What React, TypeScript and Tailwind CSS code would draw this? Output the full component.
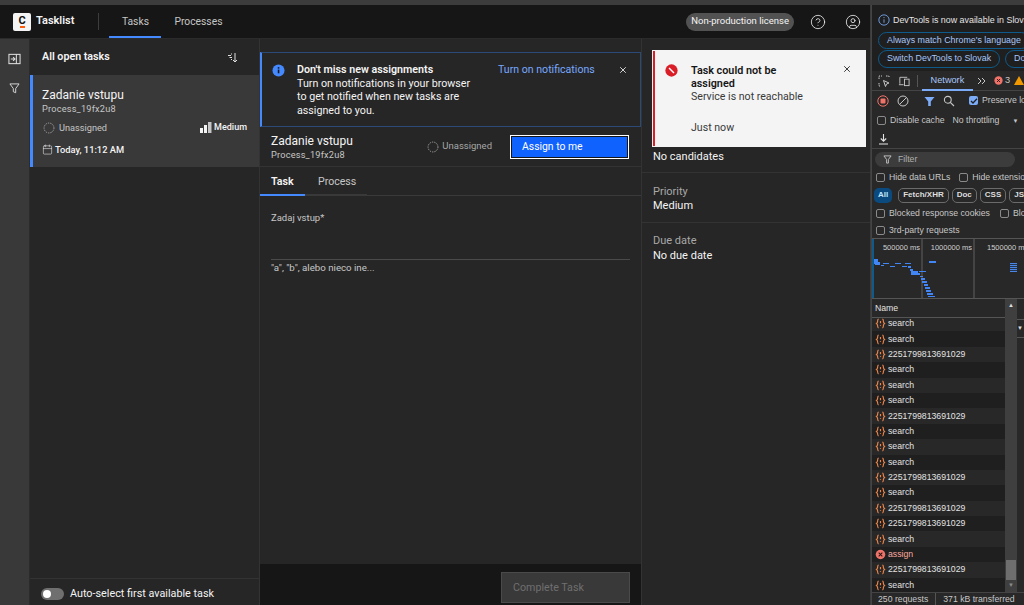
import React from "react";
import { X, CircleHelp, CircleUser, Calendar } from "lucide-react";

function Dashed({ size = 14 }: { size?: number }) {
  return (
    <svg width={size} height={size} viewBox="0 0 16 16" fill="none" stroke="#a8a8a8" strokeWidth="1.2" strokeDasharray="1.8 1.4" className="shrink-0">
      <circle cx="8" cy="8" r="6.6" />
    </svg>
  );
}

function Check({ label, checked = false }: { label: string; checked?: boolean }) {
  return (
    <span className="flex items-center gap-[4px] whitespace-nowrap text-[8.7px] text-[#c7c7c7]">
      <span className={`w-[9px] h-[9px] rounded-[2px] shrink-0 flex items-center justify-center ${checked ? "bg-[#7cacf8]" : "border border-[#8a8a8a]"}`}>
        {checked && (
          <svg width="8" height="8" viewBox="0 0 8 8" fill="none" stroke="#1f1f1f" strokeWidth="1.3"><path d="M1 4l2 2 4-4.2" /></svg>
        )}
      </span>
      {label}
    </span>
  );
}

function Chip({ label, active = false }: { label: string; active?: boolean }) {
  return (
    <span className={`h-[15px] px-[4px] flex items-center rounded-[5px] text-[8px] font-bold whitespace-nowrap shrink-0 ${active ? "bg-[#0a4a7e] text-[#c2e7ff]" : "border border-[#6b6b6b] text-[#dedede]"}`}>
      {label}
    </span>
  );
}

function ApiIcon({ error = false }: { error?: boolean }) {
  if (error) {
    return (
      <svg width="11" height="11" viewBox="0 0 12 12" className="shrink-0">
        <circle cx="6" cy="6" r="5.2" fill="#f0736a" />
        <path d="M4 4l4 4M8 4l-4 4" stroke="#2a1414" strokeWidth="1.1" />
      </svg>
    );
  }
  return (
    <svg width="11" height="11" viewBox="0 0 12 12" fill="none" stroke="#e8834a" strokeWidth="1.3" className="shrink-0">
      <path d="M4 1.2C2.6 1.2 3 3 2.7 4.4 2.5 5.4 1.8 5.8 1 6c.8.2 1.5.6 1.7 1.6C3 9 2.6 10.8 4 10.8" />
      <path d="M8 1.2c1.4 0 1 1.8 1.3 3.2.2 1 .9 1.4 1.7 1.6-.8.2-1.5.6-1.7 1.6-.3 1.4.1 3.2-1.3 3.2" />
      <path d="M6 3.2v2.6M6 7.8v1" />
    </svg>
  );
}

const requests = [
  "search", "search", "2251799813691029", "search", "search", "search", "2251799813691029", "search", "search",
  "search", "2251799813691029", "search", "2251799813691029", "2251799813691029", "search", "assign", "2251799813691029", "search",
];

const bars: [number, number, number, number][] = [
  [1, 22, 5, 5], [3, 25, 5, 3], [9, 28, 3, 1], [11, 26, 6, 1], [18, 29, 5, 1], [23, 26, 6, 1], [30, 29, 5, 1], [33, 26, 6, 1],
  [36, 29, 3, 2], [38, 32, 3, 2], [39, 34, 7, 4], [47, 34, 7, 1], [44, 36, 4, 2], [48, 39, 3, 1], [49, 41, 4, 2], [50, 44, 5, 2], [52, 47, 4, 2],
  [53, 50, 5, 2], [54, 53, 5, 2], [55, 56, 6, 2], [56, 59, 7, 1],
];

export default function App() {
  return (
    <div className="w-[1024px] h-[605px] overflow-hidden flex flex-col bg-[#3c3c3c] font-['Roboto','Noto_Sans',sans-serif]">
      <div className="h-[5px] shrink-0 bg-[#3c3c3c]" />
      <div className="flex flex-1 min-h-0">
        {/* APP */}
        <div className="w-[870px] shrink-0 flex flex-col">
          <header className="h-[34px] shrink-0 bg-[#161616] flex items-center pl-[13px] pr-[9px] border-b border-[#2b2b2b]">
            <span className="w-[18px] h-[18px] rounded-[2px] bg-[#f4f4f4] flex flex-col items-center justify-center text-[#111] leading-none">
              <span className="text-[11px] font-bold leading-[9px]">C</span>
              <span className="w-[5px] h-[2px] bg-[#fc5d0d] mt-[1px]" />
            </span>
            <span className="ml-[5px] text-[11px] font-semibold text-[#f4f4f4]">Tasklist</span>
            <span className="ml-[24px] w-px h-[17px] bg-[#3d3d3d]" />
            <nav className="ml-[10px] flex h-full">
              <span className="w-[52px] flex items-center justify-center text-[10.3px] text-[#c6c6c6] border-b-2 border-[#4589ff] pt-[2px]">Tasks</span>
              <span className="ml-[1px] w-[60px] flex items-center text-[10.3px] text-[#c6c6c6] pl-[12px]">Processes</span>
            </nav>
            <span className="ml-auto h-[18px] px-[5px] rounded-full bg-[#525252] text-[#f4f4f4] text-[9.5px] flex items-center">Non-production license</span>
            <CircleHelp size={16} strokeWidth={1.2} className="ml-[16px] text-[#f4f4f4]" />
            <CircleUser size={16} strokeWidth={1.2} className="ml-[19px] text-[#f4f4f4]" />
          </header>
          <div className="flex flex-1 min-h-0 relative">
            {/* rail */}
            <aside className="w-[30px] shrink-0 bg-[#393939] border-r border-[#2b2b2b] flex flex-col items-center pt-[14px] gap-[18px]">
              <svg width="13" height="12" viewBox="0 0 14 12" fill="none" stroke="#e0e0e0" strokeWidth="1.1">
                <rect x="1" y="1" width="12" height="10" />
                <path d="M9 1v10M3 6h4M5.5 4l2 2-2 2" />
              </svg>
              <svg width="11" height="11" viewBox="0 0 12 12" fill="none" stroke="#e0e0e0" strokeWidth="1">
                <path d="M1 1h10L7.3 6v4.6L4.7 9.5V6z" />
              </svg>
            </aside>
            {/* list */}
            <section className="w-[230px] shrink-0 bg-[#262626] border-r border-[#333333] flex flex-col">
              <div className="h-[36px] shrink-0 flex items-center justify-between pl-[12px] pr-[21px]">
                <span className="text-[10.7px] font-semibold text-[#f4f4f4]">All open tasks</span>
                <svg width="12" height="11" viewBox="0 0 12 11" fill="none" stroke="#e0e0e0" strokeWidth="1">
                  <path d="M5 3.5H2M6 5.5H3.5M6 7.5H5M9 1v9M7 8l2 2 2-2M6 2H5" />
                </svg>
              </div>
              <article className="h-[92px] bg-[#393939] border-l-[3px] border-[#4589ff] pl-[9px] pr-[12px] pt-[12px] flex flex-col shrink-0">
                <span className="text-[12px] leading-[16px] text-[#f4f4f4]">Zadanie vstupu</span>
                <span className="text-[9.2px] leading-[12px] text-[#c6c6c6] tracking-[0.2px]">Process_19fx2u8</span>
                <div className="flex items-center justify-between mt-[6px]">
                  <span className="flex items-center gap-[4px] pl-[1px] text-[9.2px] text-[#c6c6c6]"><Dashed size={12} />Unassigned</span>
                  <span className="flex items-center gap-[2px] text-[9px] text-[#f4f4f4] font-medium">
                    <svg width="12" height="11" viewBox="0 0 12 11" fill="#f4f4f4"><rect x="0" y="6" width="3" height="5" /><rect x="4" y="3" width="3" height="8" /><rect x="8" y="0" width="3.5" height="11" fill="#c6c6c6" /></svg>
                    Medium
                  </span>
                </div>
                <span className="flex items-center gap-[2px] mt-[8px] text-[9.3px] font-medium text-[#f4f4f4]"><Calendar size={11} strokeWidth={1.2} />Today, 11:12 AM</span>
              </article>
              <div className="mt-auto h-[27px] shrink-0 border-t border-[#333333] flex items-center pl-[11px] pt-[4px]">
                <span className="w-[23px] h-[12px] rounded-full bg-[#6f6f6f] flex items-center pl-[2px]">
                  <span className="w-[8px] h-[8px] rounded-full bg-white" />
                </span>
                <span className="ml-[6px] text-[10.8px] text-[#f4f4f4]">Auto-select first available task</span>
              </div>
            </section>
            {/* main */}
            <main className="w-[382px] shrink-0 bg-[#262626] border-r border-[#333333] flex flex-col pt-[13px]">
              <div className="h-[75px] shrink-0 border border-[#2c4a78] border-l-[2px] border-l-[#4589ff] flex pl-[10px] pt-[10px] pr-[12px]">
                <svg width="13" height="13" viewBox="0 0 14 14" className="shrink-0 mt-[1px]">
                  <circle cx="7" cy="7" r="6.5" fill="#4589ff" />
                  <rect x="6.2" y="6" width="1.7" height="4" fill="#161616" />
                  <rect x="6.2" y="3.4" width="1.7" height="1.6" fill="#161616" />
                </svg>
                <div className="ml-[12px] w-[183px] text-[10.7px] leading-[13.5px] text-[#f4f4f4]">
                  <div className="font-semibold">Don&apos;t miss new assignments</div>
                  <div>Turn on notifications in your browser to get notified when new tasks are assigned to you.</div>
                </div>
                <span className="ml-[18px] text-[10.6px] leading-[13px] text-[#78a9ff] whitespace-nowrap">Turn on notifications</span>
                <X size={10} strokeWidth={2} className="ml-auto mt-[2px] text-[#f4f4f4]" />
              </div>
              <div className="h-[40px] shrink-0 flex items-center pl-[11px] pr-[12px] border-b border-[#333333]">
                <div className="flex flex-col">
                  <span className="text-[12px] leading-[15px] text-[#f4f4f4]">Zadanie vstupu</span>
                  <span className="text-[9.2px] leading-[11px] text-[#c6c6c6] tracking-[0.2px]">Process_19fx2u8</span>
                </div>
                <span className="ml-auto flex items-center gap-[3px] text-[9.5px] text-[#a8a8a8]"><Dashed size={12} />Unassigned</span>
                <span className="ml-[18px] w-[119px] h-[24px] bg-[#0f62fe] border border-white shadow-[inset_0_0_0_1px_#161616] flex items-center pl-[11px] pt-[1px] text-[10.4px] text-white">Assign to me</span>
              </div>
              <div className="h-[29px] shrink-0 flex border-b border-[#3a3a3a]">
                <span className="w-[45px] flex items-center pl-[11px] pt-[3px] text-[10.7px] font-semibold text-[#f4f4f4] border-b-2 border-[#4589ff] h-[29px]">Task</span>
                <span className="w-[62px] flex items-center pl-[13px] pt-[3px] text-[10.6px] text-[#c6c6c6] border-b-2 border-[#393939] h-[29px]">Process</span>
              </div>
              <div className="flex-1 pl-[11px] pr-[11px] pt-[16px] flex flex-col">
                <span className="text-[9.5px] leading-[12px] text-[#c6c6c6]">Zadaj vstup*</span>
                <div className="mt-[35px] h-px bg-[#4a4a4a]" />
                <span className="mt-[2px] text-[9.7px] leading-[12px] text-[#c6c6c6]">&quot;a&quot;, &quot;b&quot;, alebo nieco ine...</span>
              </div>
              <div className="h-[41px] shrink-0 bg-[#161616] flex justify-end items-start pr-[11px] pt-[8px]">
                <span className="w-[129px] h-[31px] bg-[#393939] border border-[#4a4a4a] flex items-center pl-[11px] pt-[1px] text-[10.7px] text-[#6f6f6f]">Complete Task</span>
              </div>
            </main>
            {/* right */}
            <aside className="flex-1 bg-[#262626] flex flex-col pt-[109px] pl-[11px] text-[11px]">
              <span className="leading-[14px] text-[#f4f4f4] mt-[2px]">No candidates</span>
              <div className="-ml-[11px] h-px bg-[#333333] mt-[8px]" />
              <span className="mt-[12px] leading-[13px] text-[#a8a8a8]">Priority</span>
              <span className="leading-[15px] text-[#f4f4f4]">Medium</span>
              <div className="-ml-[11px] h-px bg-[#333333] mt-[9px]" />
              <span className="mt-[11px] leading-[13px] text-[#a8a8a8]">Due date</span>
              <span className="leading-[15px] mt-[1px] text-[#f4f4f4]">No due date</span>
            </aside>
            {/* toast */}
            <div className="absolute left-[653px] top-[12px] w-[212px] h-[95px] bg-[#f4f4f4] border-l-[2px] border-l-[#da1e28] flex pl-[10px] pt-[13px] pr-[13px] shadow-[0_0_0_1px_#f4f4f4]">
              <svg width="13" height="13" viewBox="0 0 14 14" className="shrink-0">
                <circle cx="7" cy="7" r="6.6" fill="#da1e28" />
                <path d="M4.3 4.3l5.4 5.4" stroke="#fff" strokeWidth="1.5" />
              </svg>
              <div className="ml-[13px] flex-1 text-[10.6px] leading-[13px] text-[#161616]">
                <div className="font-semibold w-[110px] text-[10.8px]">Task could not be assigned</div>
                <div className="text-[#393939]">Service is not reachable</div>
                <div className="mt-[18px] text-[#393939]">Just now</div>
              </div>
              <X size={10} strokeWidth={2} className="shrink-0 text-[#161616]" />
            </div>
          </div>
        </div>
        {/* DEVTOOLS */}
        <div className="w-px bg-[#3c3c3c]" />
        <div className="flex-1 min-w-0 bg-[#282828] flex flex-col overflow-hidden font-['Liberation_Sans','Roboto',sans-serif] text-[#e3e3e3] border-l border-[#444]">
          <div className="h-[66px] shrink-0 bg-[#1f1f1f] pl-[6px] pt-[8px] flex flex-col overflow-hidden">
            <div className="flex items-center gap-[3px] text-[8.9px] leading-[14px] whitespace-nowrap">
              <svg width="12" height="12" viewBox="0 0 14 14" fill="none" stroke="#7cacf8" strokeWidth="1" className="shrink-0"><circle cx="7" cy="7" r="6" /><path d="M7 6.2v4M7 3.6v1.2" /></svg>
              DevTools is now available in Slovak
            </div>
            <div className="flex flex-col mt-[5px]">
              <span className="h-[17px] w-max flex items-center px-[8px] rounded-full border border-[#0e5a8a] text-[8.9px] text-[#a8c7fa] whitespace-nowrap">Always match Chrome&apos;s language</span>
              <div className="flex gap-[5px] whitespace-nowrap mt-[1px]">
                <span className="h-[18px] flex items-center px-[8px] rounded-full border border-[#0e5a8a] text-[8.9px] text-[#a8c7fa]">Switch DevTools to Slovak</span>
                <span className="h-[18px] flex items-center px-[8px] rounded-full border border-[#0e5a8a] text-[8.9px] text-[#a8c7fa]">Don&apos;t show again</span>
              </div>
            </div>
          </div>
          <div className="h-[20px] shrink-0 flex items-center pl-[6px] border-b border-[#444] bg-[#282828] whitespace-nowrap">
            <svg width="12" height="12" viewBox="0 0 12 12" fill="none" stroke="#c7c7c7" strokeWidth="1" className="shrink-0"><path d="M1 4V1h3M8 1h3v2M1 8v3h2" strokeDasharray="1.5 1" /><path d="M5.5 5.5l2 6 1-2.5 2.5-1z" /></svg>
            <svg width="12" height="12" viewBox="0 0 13 12" fill="none" stroke="#c7c7c7" strokeWidth="1" className="ml-[8px] shrink-0"><path d="M2 9V2h8M1 10h5" /><rect x="7" y="4" width="5" height="7" /></svg>
            <span className="ml-[7px] w-px h-[12px] bg-[#555]" />
            <span className="ml-[4px] h-[20px] w-[51px] justify-center pt-[2px] flex items-center text-[9.2px] text-[#a8c7fa] border-b-2 border-[#7cacf8]">Network</span>
            <svg width="9" height="8" viewBox="0 0 9 8" fill="none" stroke="#c7c7c7" className="ml-[4px] shrink-0"><path d="M1 1l3 3-3 3M5 1l3 3-3 3" /></svg>
            <svg width="9" height="9" viewBox="0 0 10 10" className="ml-[8px] shrink-0"><circle cx="5" cy="5" r="4.6" fill="#f0736a" /><path d="M3.3 3.3l3.4 3.4M6.7 3.3l-3.4 3.4" stroke="#2a1414" strokeWidth="1" /></svg>
            <span className="ml-[2px] text-[9.2px] text-[#c7c7c7]">3</span>
            <svg width="10" height="9" viewBox="0 0 10 9" className="ml-[4px] shrink-0"><path d="M5 0l5 9H0z" fill="#f29900" /></svg>
          </div>
          <div className="h-[20px] shrink-0 flex items-center pl-[5px] whitespace-nowrap">
            <svg width="12" height="12" viewBox="0 0 12 12" fill="none" className="shrink-0"><circle cx="6" cy="6" r="5.2" stroke="#f0736a" /><rect x="3.5" y="3.5" width="5" height="5" rx="1" fill="#f0736a" /></svg>
            <svg width="12" height="12" viewBox="0 0 12 12" fill="none" stroke="#c7c7c7" className="ml-[8px] shrink-0"><circle cx="6" cy="6" r="5" /><path d="M2.6 9.4l6.8-6.8" /></svg>
            <span className="ml-[7px] w-px h-[12px] bg-[#555]" />
            <svg width="11" height="11" viewBox="0 0 11 11" fill="#7cacf8" className="ml-[8px] shrink-0"><path d="M0.5 1h10L6.8 5.6V10H4.2V5.6z" /></svg>
            <svg width="12" height="12" viewBox="0 0 12 12" fill="none" stroke="#c7c7c7" strokeWidth="1.1" className="ml-[8px] shrink-0"><circle cx="4.8" cy="4.8" r="3.4" /><path d="M7.3 7.3l3.7 3.7" /></svg>
            <span className="ml-[6px] w-px h-[12px] bg-[#555]" />
            <span className="ml-[8px]"><Check label="Preserve log" checked /></span>
          </div>
          <div className="h-[20px] shrink-0 flex items-center pl-[5px] whitespace-nowrap text-[8.7px] text-[#c7c7c7]">
            <Check label="Disable cache" />
            <span className="ml-[8px]">No throttling</span>
            <span className="ml-[13px] text-[6px]">▼</span>
          </div>
          <div className="h-[18px] shrink-0 flex items-center pl-[6px] border-b border-[#444]">
            <svg width="11" height="11" viewBox="0 0 11 11" fill="none" stroke="#e3e3e3" strokeWidth="1.1"><path d="M5.5 0v7M2.8 4.5l2.7 2.7 2.7-2.7M1 10h9" /></svg>
          </div>
          <div className="h-[20px] shrink-0 flex items-center pl-[3px] pt-[1px]">
            <span className="w-[140px] h-[15px] shrink-0 rounded-full bg-[#3c3c3c] flex items-center pl-[8px] text-[8.7px] text-[#b0b0b0] gap-[6px]">
              <svg width="9" height="9" viewBox="0 0 10 10" fill="none" stroke="#c7c7c7"><path d="M1 1h8L6 5v4H4V5z" /></svg>
              Filter
            </span>
          </div>
          <div className="h-[17px] shrink-0 flex items-center pl-[4px] gap-[9px]"><Check label="Hide data URLs" /><Check label="Hide extension URLs" /></div>
          <div className="h-[18px] shrink-0 flex items-center pl-[2px] gap-[3px]">
            <Chip label="All" active />
            <span className="w-[2px]" />
            <Chip label="Fetch/XHR" /><Chip label="Doc" /><Chip label="CSS" /><Chip label="JS" /><Chip label="Font" />
          </div>
          <div className="h-[18px] shrink-0 flex items-center pl-[4px] pt-[1px] gap-[10px]"><Check label="Blocked response cookies" /><Check label="Blocked requests" /></div>
          <div className="h-[16px] shrink-0 flex items-center pl-[4px] pt-[1px]"><Check label="3rd-party requests" /></div>
          <div className="h-[61px] shrink-0 border-t border-[#555] border-b relative flex text-[7.5px] text-[#d0d0d0] overflow-hidden">
            <span className="w-[51px] shrink-0 border-r-2 border-[#444] text-right pr-[1px] pt-[3px] whitespace-nowrap">500000 ms</span>
            <span className="w-[52px] shrink-0 border-r-2 border-[#444] text-right pr-[1px] pt-[3px] whitespace-nowrap">1000000 ms</span>
            <span className="flex-1 pt-[3px] whitespace-nowrap pl-[12px]">1500000 ms</span>
            {bars.map(([x, y, w, h], i) => (
              <span key={i} className="absolute bg-[#4285f4]" style={{ left: x, top: y - 2, width: w, height: h }} />
            ))}
            <span className="absolute left-[57px] top-[22px] w-[7px] h-[2px] bg-[#4285f4]" />
            <span className="absolute left-[138px] top-[24px] w-[7px] h-[9px] bg-[repeating-linear-gradient(#4a86e8_0_1px,#23344f_1px_2px)]" />
            <span className="absolute left-0 top-0 w-[2px] h-full bg-[#0e5a8a]" />
          </div>
          <div className="flex flex-1 min-h-0">
            <div className="w-[133px] shrink-0 flex flex-col overflow-hidden">
              <div className="h-[19px] shrink-0 flex items-center pl-[3px] pt-[1px] text-[8.7px] bg-[#282828] border-b border-[#555] text-[#e3e3e3]">Name</div>
              <div className="flex-1 min-h-0 overflow-hidden">
                <div className="-mt-[2px]">
                  {requests.map((r, i) => (
                    <div key={i} className={`h-[15.4px] flex items-center pl-[3px] gap-[2px] text-[8.7px] ${i % 2 === 1 ? "bg-[#1f1f1f]" : "bg-[#282828]"} ${r === "assign" ? "text-[#f9a99f]" : "text-[#e3e3e3]"}`}>
                      <ApiIcon error={r === "assign"} />
                      <span>{r}</span>
                    </div>
                  ))}
                </div>
              </div>
            </div>
            <div className="w-[12px] shrink-0 bg-[#3f3f3f] flex flex-col items-center justify-between relative">
              <span className="mt-[3px] text-[6px] leading-none text-[#ddd]">▲</span>
              <span className="absolute left-[1px] right-[1px] bottom-[12px] h-[20px] bg-[#6e6e6e]" />
              <span className="mb-[4px] text-[6px] leading-none text-[#8a8a8a]">▼</span>
            </div>
            <div className="flex-1 flex flex-col">
              <div className="h-[21px] border-b border-[#555]" />
              <div className="h-[18px] border-b border-[#555] flex items-center text-[6px] text-[#ddd]">▼</div>
            </div>
          </div>
          <div className="h-[13px] shrink-0 border-t border-[#444] flex items-start pl-[6px] text-[8.7px] leading-[13px] text-[#c7c7c7] whitespace-nowrap overflow-hidden">
            <span>250 requests</span>
            <span className="ml-[7px] w-px h-[12px] bg-[#555]" />
            <span className="ml-[7px]">371 kB transferred</span>
          </div>
        </div>
      </div>
    </div>
  );
}
